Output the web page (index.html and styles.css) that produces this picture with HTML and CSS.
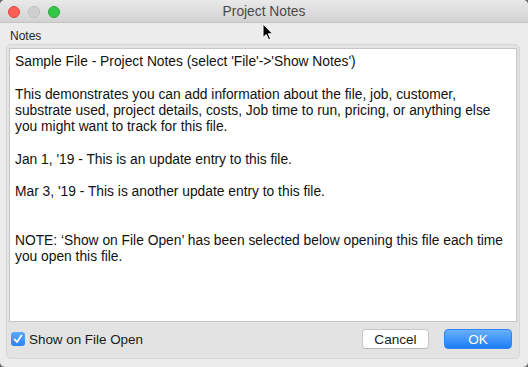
FILE: index.html
```html
<!DOCTYPE html>
<html>
<head>
<meta charset="utf-8">
<link rel="stylesheet" href="styles.css">
</head>
<body>
<div class="window">
  <div class="titlebar">
    <div class="lights">
      <span class="light red"></span>
      <span class="light gray"></span>
      <span class="light green"></span>
    </div>
    <div class="title">Project Notes</div>
  </div>
  <div class="content">
    <div class="label">Notes</div>
    <div class="group">
      <div class="textarea">
        <div class="line">Sample File - Project Notes (select 'File'-&gt;'Show Notes')</div>
        <div class="line">&nbsp;</div>
        <div class="line">This demonstrates you can add information about the file, job, customer,</div>
        <div class="line">substrate used, project details, costs, Job time to run, pricing, or anything else</div>
        <div class="line">you might want to track for this file.</div>
        <div class="line">&nbsp;</div>
        <div class="line">Jan 1, '19 - This is an update entry to this file.</div>
        <div class="line">&nbsp;</div>
        <div class="line">Mar 3, '19 - This is another update entry to this file.</div>
        <div class="line">&nbsp;</div>
        <div class="line">&nbsp;</div>
        <div class="line">NOTE: ‘Show on File Open’ has been selected below opening this file each time</div>
        <div class="line">you open this file.</div>
      </div>
      <div class="footer">
        <label class="check">
          <span class="box"><svg viewBox="0 0 14 14" width="14" height="14"><path d="M3.6 7.4 L6 10 L10.4 3.6" fill="none" stroke="#fff" stroke-width="1.8" stroke-linecap="round" stroke-linejoin="round"/></svg></span>
          <span class="check-text">Show on File Open</span>
        </label>
        <div class="buttons">
          <div class="btn cancel">Cancel</div>
          <div class="btn ok">OK</div>
        </div>
      </div>
    </div>
  </div>
  <svg class="cursor" width="12" height="18" viewBox="0 0 12 18"><path d="M1 1 L1 14.5 L4.2 11.5 L6.6 16.6 L8.6 15.7 L6.3 10.8 L10.6 10.8 Z" fill="#000" stroke="#fff" stroke-width="1"/></svg>
</div>
</body>
</html>
```
FILE: styles.css
```css
html, body {
  margin: 0;
  padding: 0;
  background: #6a6a6a;
}
body {
  width: 528px;
  height: 367px;
  overflow: hidden;
  font-family: "Liberation Sans", Arial, sans-serif;
}
.window {
  position: relative;
  width: 528px;
  height: 367px;
  background: #ececec;
  border-radius: 5px 5px 5px 5px;
  overflow: hidden;
}
.titlebar {
  position: relative;
  height: 22px;
  background: linear-gradient(#e9e9e9, #d2d2d2);
  border-bottom: 1px solid #c4c4c4;
  display: flex;
  align-items: center;
  justify-content: center;
}
.lights {
  position: absolute;
  left: 8px;
  top: 6px;
  display: flex;
  gap: 8px;
}
.light {
  width: 12px;
  height: 12px;
  border-radius: 50%;
  box-sizing: border-box;
}
.red { background: #fc5f57; border: 1px solid #e2463f; }
.gray { background: #d0d0d0; border: 1px solid #c0c0c0; }
.green { background: #33c748; border: 1px solid #27aa35; }
.title {
  font-size: 13.8px;
  color: #4a4a4a;
  padding-top: 1px;
}
.content {
  padding: 0 8px 0 6px;
}
.label {
  font-size: 12px;
  color: #262626;
  padding: 6px 0 0 4px;
  height: 15px;
  line-height: 14px;
}
.group {
  height: 315px;
  box-sizing: border-box;
  background: #e3e3e3;
  border: 1px solid #d6d6d6;
  border-radius: 5px;
  padding: 3px 2px 0 2px;
  display: flex;
  flex-direction: column;
}
.textarea {
  height: 274px;
  box-sizing: border-box;
  background: #fff;
  border: 1px solid #c6c6c6;
  padding: 5px 5px 0 5px;
  font-size: 13.8px;
  line-height: 16.25px;
  color: #111;
}
.line {
  white-space: nowrap;
}
.footer {
  flex: 1;
  display: flex;
  align-items: center;
  justify-content: space-between;
  padding: 0 5px 2px 2px;
}
.check {
  display: flex;
  align-items: center;
  gap: 4px;
  font-size: 13.4px;
  color: #1a1a1a;
}
.box {
  width: 14px;
  height: 14px;
  border-radius: 3px;
  background: linear-gradient(#5ba8fb, #2a84f6);
  display: flex;
}
.buttons {
  display: flex;
  gap: 15px;
}
.btn {
  height: 20px;
  box-sizing: border-box;
  border-radius: 4px;
  font-size: 13.6px;
  display: flex;
  align-items: center;
  justify-content: center;
}
.cancel {
  width: 67px;
  background: #fff;
  border: 1px solid #c8c8c8;
  border-bottom-color: #b8b8b8;
  color: #1a1a1a;
}
.ok {
  width: 68px;
  background: linear-gradient(#68b0fb, #1c7ef6);
  border: 1px solid #2f84ee;
  color: #fff;
}
.cursor {
  position: absolute;
  left: 262px;
  top: 23px;
}
```
